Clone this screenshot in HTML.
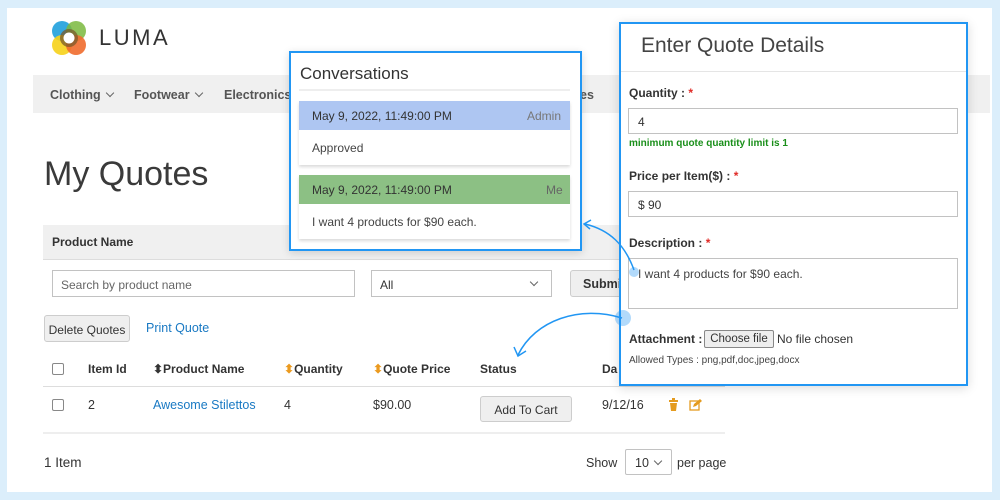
<!DOCTYPE html>
<html><head><meta charset="utf-8"><style>
*{box-sizing:border-box;margin:0;padding:0}
body{width:1000px;height:500px;background:#dbeefb;font-family:"Liberation Sans",sans-serif;color:#333;position:relative;overflow:hidden;font-size:12.5px}
.a{position:absolute;white-space:nowrap}
.page{left:7px;top:8px;width:985px;height:484px;background:#fff}
.inp{border:1px solid #c2c2c2;background:#fff}
.btn{background:#efefef;border:1px solid #cdcdcd;border-radius:3px;color:#333;text-align:center}
.b{font-weight:bold}
.star{color:#e02b27}
.lbl{font-weight:bold;font-size:12px;color:#333}
.chev{display:inline-block;width:6px;height:6px;border-right:1px solid #666;border-bottom:1px solid #666;transform:rotate(45deg);vertical-align:3px;margin-left:6px}
</style></head><body>
<div class="a page"></div>
<!-- logo -->
<svg class="a" style="left:50px;top:19px" width="38" height="38" viewBox="0 0 38 38">
<circle cx="12" cy="12" r="10" fill="#1fa0dd" opacity=".9"/>
<circle cx="26" cy="12" r="10" fill="#7ab93d" opacity=".85"/>
<circle cx="12" cy="26" r="10" fill="#f6d21a" opacity=".9"/>
<circle cx="26" cy="26" r="10" fill="#ef6b2e" opacity=".9"/>
<circle cx="19" cy="19" r="9" fill="#7a5a2b" opacity=".75"/>
<circle cx="19" cy="19" r="5.5" fill="#fff"/>
</svg>
<div class="a" style="left:99px;top:25px;font-size:22px;letter-spacing:2.5px;color:#333">LUMA</div>
<!-- nav -->
<div class="a" style="left:33px;top:75px;width:957px;height:38px;background:#f0f0f0"></div>
<div class="a b" style="left:50px;top:88px;font-size:12.5px;color:#555">Clothing<span class="chev"></span></div>
<div class="a b" style="left:134px;top:88px;font-size:12.5px;color:#555">Footwear<span class="chev"></span></div>
<div class="a b" style="left:224px;top:88px;font-size:12.5px;color:#555">Electronics</div>
<div class="a b" style="left:580px;top:88px;font-size:12.5px;color:#555">es</div>
<div class="a" style="left:44px;top:155px;font-size:34px;color:#3a3a3a">My Quotes</div>
<div class="a" style="left:43px;top:225px;width:682px;height:35px;background:#f0f0f0;border-bottom:1px solid #ddd"></div>
<div class="a b" style="left:52px;top:235px;font-size:12px">Product Name</div>
<div class="a inp" style="left:52px;top:270px;width:303px;height:27px;padding:7px 8px;font-size:12px;color:#666">Search by product name</div>
<div class="a inp" style="left:371px;top:270px;width:181px;height:27px;padding:7px 8px;font-size:12px">All<span class="chev" style="position:absolute;right:14px;top:8px"></span></div>
<div class="a btn" style="left:570px;top:270px;width:60px;height:27px;padding:6px 12px;font-size:12.5px;font-weight:bold;text-align:left">Submit</div>
<div class="a btn" style="left:44px;top:315px;width:86px;height:27px;padding:7px 0;font-size:12px">Delete Quotes</div>
<div class="a" style="left:146px;top:321px;color:#1979c3;font-size:12.5px">Print Quote</div>
<div class="a" style="left:52px;top:363px;width:12px;height:12px;border:1px solid #888;border-radius:2px"></div>
<div class="a b" style="left:88px;top:362px;font-size:12px">Item Id</div>
<div class="a b" style="left:153px;top:362px;font-size:12px">⬍Product Name</div>
<div class="a b" style="left:284px;top:362px;font-size:12px"><span style="color:#eb9a1f">⬍</span>Quantity</div>
<div class="a b" style="left:373px;top:362px;font-size:12px"><span style="color:#eb9a1f">⬍</span>Quote Price</div>
<div class="a b" style="left:480px;top:362px;font-size:12px">Status</div>
<div class="a b" style="left:602px;top:362px;font-size:12px">Da</div>
<div class="a" style="left:43px;top:386px;width:682px;height:1px;background:#ddd"></div>
<div class="a" style="left:52px;top:399px;width:12px;height:12px;border:1px solid #888;border-radius:2px"></div>
<div class="a" style="left:88px;top:398px">2</div>
<div class="a" style="left:153px;top:398px;color:#1979c3">Awesome Stilettos</div>
<div class="a" style="left:284px;top:398px">4</div>
<div class="a" style="left:373px;top:398px">$90.00</div>
<div class="a btn" style="left:480px;top:396px;width:92px;height:26px;padding:6px 0;font-size:12px">Add To Cart</div>
<div class="a" style="left:602px;top:398px">9/12/16</div>
<svg class="a" style="left:668px;top:398px" width="34" height="14" viewBox="0 0 34 14">
<rect x="1" y="2" width="9" height="2" fill="#e49b1f"/><rect x="4" y="0" width="3" height="2" fill="#e49b1f"/>
<path d="M2 5h7l-1 8H3z" fill="#e49b1f"/>
<rect x="22" y="3" width="9" height="9" fill="none" stroke="#e49b1f" stroke-width="1.3"/>
<path d="M25 9l1-3 6-5 2 2-6 5z" fill="#e49b1f"/>
</svg>
<div class="a" style="left:43px;top:432px;width:682px;height:2px;background:#eee"></div>
<div class="a" style="left:44px;top:455px;font-size:13.5px">1 Item</div>
<div class="a" style="left:586px;top:456px;font-size:12.5px">Show</div>
<div class="a inp" style="left:625px;top:449px;width:47px;height:26px;padding:6px 9px;border-radius:2px;font-size:12.5px">10<span class="chev"></span></div>
<div class="a" style="left:677px;top:456px;font-size:12.5px">per page</div>

<!-- conversations -->
<div class="a" style="left:289px;top:51px;width:293px;height:200px;background:#fff;border:2px solid #2196f3;box-shadow:0 2px 8px rgba(0,0,0,.15)"></div>
<div class="a" style="left:300px;top:64px;font-size:17px;color:#333">Conversations</div>
<div class="a" style="left:299px;top:89px;width:271px;height:2px;background:#eee"></div>
<div class="a" style="left:299px;top:101px;width:271px;height:64px;background:#fff;box-shadow:0 2px 3px rgba(0,0,0,.15)"></div>
<div class="a" style="left:299px;top:101px;width:271px;height:29px;background:#aec6f2"></div>
<div class="a" style="left:312px;top:109px;font-size:12px">May 9, 2022, 11:49:00 PM</div>
<div class="a" style="left:527px;top:109px;font-size:12px;color:#777">Admin</div>
<div class="a" style="left:312px;top:141px;font-size:12px;color:#444">Approved</div>
<div class="a" style="left:299px;top:175px;width:271px;height:64px;background:#fff;box-shadow:0 2px 3px rgba(0,0,0,.15)"></div>
<div class="a" style="left:299px;top:175px;width:271px;height:29px;background:#8cc084"></div>
<div class="a" style="left:312px;top:183px;font-size:12px">May 9, 2022, 11:49:00 PM</div>
<div class="a" style="left:546px;top:183px;font-size:12px;color:#666">Me</div>
<div class="a" style="left:312px;top:215px;font-size:12px;color:#444">I want 4 products for $90 each.</div>

<!-- quote modal -->
<div class="a" style="left:619px;top:22px;width:349px;height:364px;background:#fff;border:2px solid #2196f3;box-shadow:0 2px 10px rgba(0,0,0,.15)"></div>
<div class="a" style="left:641px;top:34px;font-size:21px;color:#444">Enter Quote Details</div>
<div class="a" style="left:621px;top:71px;width:345px;height:1px;background:#e5e5e5"></div>
<div class="a lbl" style="left:629px;top:86px">Quantity : <span class="star">*</span></div>
<div class="a inp" style="left:628px;top:108px;width:330px;height:26px;padding:6px 9px;font-size:12px">4</div>
<div class="a" style="left:629px;top:138px;font-size:10px;font-weight:bold;color:#1a8f1a">minimum quote quantity limit is 1</div>
<div class="a lbl" style="left:629px;top:169px">Price per Item($) : <span class="star">*</span></div>
<div class="a inp" style="left:628px;top:191px;width:330px;height:26px;padding:6px 9px;font-size:12px">$ 90</div>
<div class="a lbl" style="left:629px;top:236px">Description : <span class="star">*</span></div>
<div class="a inp" style="left:628px;top:258px;width:330px;height:51px;padding:8px 9px;font-size:12px;color:#444">I want 4 products for $90 each.</div>
<div class="a lbl" style="left:629px;top:332px">Attachment :</div>
<div class="a" style="left:704px;top:330px;width:70px;height:18px;border:1px solid #888;background:#eee;border-radius:2px;font-size:11.5px;padding:2px 0;text-align:center">Choose file</div>
<div class="a" style="left:777px;top:332px;font-size:12px">No file chosen</div>
<div class="a" style="left:629px;top:355px;font-size:10px;color:#444">Allowed Types : png,pdf,doc,jpeg,docx</div>

<!-- arrows -->
<svg class="a" style="left:0;top:0" width="1000" height="500">
<g fill="none" stroke="#2196f3" stroke-width="1.5">
<path d="M634 270 C625 245 610 230 585 224"/>
<path d="M591 220 L584 224 L590 229"/>
<path d="M622 318 C580 305 535 320 518 355"/>
<path d="M514 347 L518 356 L526 351"/>
</g>
<circle cx="634" cy="272" r="5" fill="#2196f3" opacity=".35"/>
<circle cx="623" cy="318" r="8" fill="#2196f3" opacity=".35"/>
</svg>
</body></html>
